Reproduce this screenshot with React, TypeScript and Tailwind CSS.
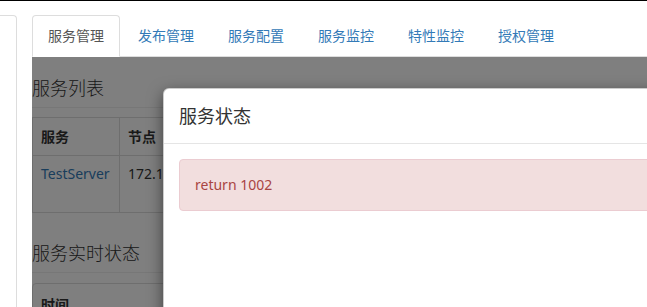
import React from "react";

const tabs = ["服务管理", "发布管理", "服务配置", "服务监控", "特性监控", "授权管理"];

export default function App() {
  return (
    <div
      className="h-[307px] w-[647px] overflow-hidden bg-white text-[14px] leading-[20px] text-[#333]"
      style={{ fontFamily: '"Noto Sans", "Noto Sans CJK SC", sans-serif' }}
    >
      <div className="h-[1px] bg-black" />
      <div className="flex h-[306px] pt-[14px]">
        {/* 左侧面板 */}
        <div className="h-full w-[17px] shrink-0 rounded-tr-[4px] border-t border-r border-[#ddd]" />

        <div className="ml-[15px] flex min-w-0 flex-1 flex-col">
          {/* 标签页 */}
          <ul className="flex h-[42px] border-b border-[#ddd]">
            {tabs.map((t, i) => (
              <li key={t} className="mr-[2px] -mb-[1px]">
                <a
                  className={
                    i === 0
                      ? "block rounded-t-[4px] border border-[#ddd] border-b-white bg-white px-[15px] py-[10px] text-[#555]"
                      : "block rounded-t-[4px] border border-transparent px-[15px] py-[10px] text-[#337ab7]"
                  }
                >
                  {t}
                </a>
              </li>
            ))}
          </ul>

          {/* 标签内容 */}
          <div className="relative flex-1">
            <div className="pt-[18px]">
              <h3 className="border-b border-[#eee] pb-[6px] text-[18px] leading-[26px] font-light">服务列表</h3>
              <table className="mt-[9px] mb-[27px] w-[600px] border-collapse">
                <thead>
                  <tr className="h-[38px]">
                    <th className="border border-[#ddd] px-[8px] text-left font-bold">服务</th>
                    <th className="border border-[#ddd] px-[8px] text-left font-bold">节点</th>
                    <th className="border border-[#ddd] px-[8px] text-left font-bold">状态</th>
                    <th className="border border-[#ddd] px-[8px] text-left font-bold">操作</th>
                  </tr>
                </thead>
                <tbody>
                  <tr className="h-[57px]">
                    <td className="w-[87px] border border-[#ddd] px-[8px] pt-[8px] align-top text-[#337ab7]">TestServer</td>
                    <td className="border border-[#ddd] px-[8px] pt-[8px] align-top">172.16.0.12:9000</td>
                    <td className="border border-[#ddd] px-[8px] pt-[8px] align-top">运行中</td>
                    <td className="border border-[#ddd] px-[8px] pt-[8px] align-top">查看</td>
                  </tr>
                </tbody>
              </table>
              <h3 className="border-b border-[#eee] pb-[6px] text-[18px] leading-[26px] font-light">服务实时状态</h3>
              <div className="mt-[10px] w-[600px] rounded-tl-[4px] border border-[#ddd]">
                <div className="px-[8px] pt-[11px] font-bold">时间</div>
              </div>
            </div>

            {/* 遮罩 */}
            <div className="absolute inset-0 bg-black/50" />

            {/* 弹窗 */}
            <div className="absolute top-[31px] left-[131px] h-[300px] w-[600px] rounded-[6px] border border-black/20 bg-white shadow-[0_5px_15px_rgba(0,0,0,0.5)]">
              <div className="border-b border-[#e5e5e5] p-[15px]">
                <h4 className="text-[18px] leading-[24px] font-normal text-[#333]">服务状态</h4>
              </div>
              <div className="p-[15px]">
                <div className="rounded-[4px] border border-[#ebccd1] bg-[#f2dede] p-[15px] text-[#a94442]">
                  return 1002
                </div>
              </div>
            </div>
          </div>
        </div>
      </div>
    </div>
  );
}
